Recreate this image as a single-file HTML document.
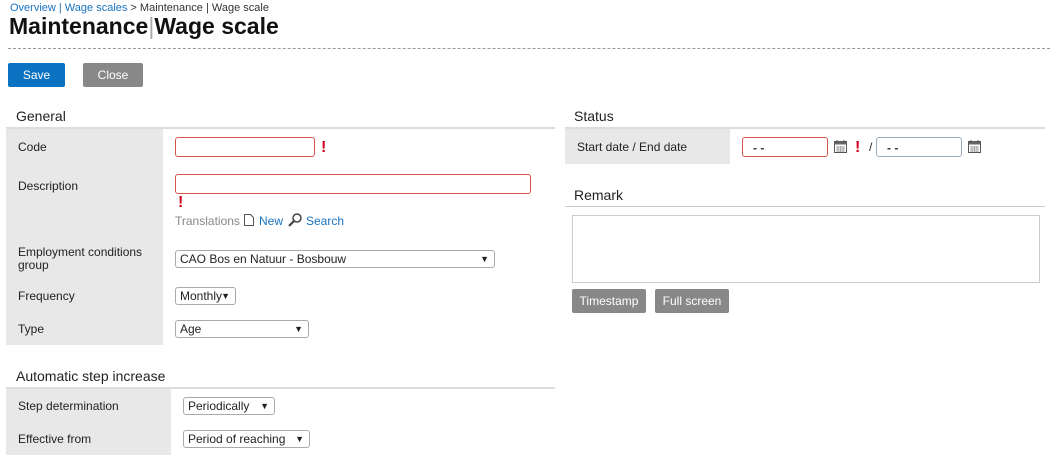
<!DOCTYPE html>
<html><head><meta charset="utf-8"><style>
*{box-sizing:border-box;margin:0;padding:0}
body{width:1058px;height:460px;background:#fff;font-family:"Liberation Sans",Arial,sans-serif;font-size:12px;color:#222;position:relative;overflow:hidden}
.a{position:absolute}
.bc{left:10px;top:2px;font-size:11px;color:#333}
.bc span{color:#1a73c0}
h1{position:absolute;left:9px;top:13px;font-size:23px;font-weight:bold;color:#111}
h1 i{font-style:normal;color:#aaa;font-weight:normal}
.dash{left:8px;top:48px;width:1042px;border-top:1px dashed #999}
.btn{position:absolute;color:#fff;font-size:12px;text-align:center;border-radius:2px}
.sec{position:absolute;font-size:14px;color:#222}
.line{position:absolute;border-top:2px solid #ddd}
.gray{position:absolute;background:#e8e8e8}
.lbl{position:absolute;font-size:12px;color:#222}
.inp{position:absolute;border:1px solid #d9534f;border-radius:3px;background:#fff}
.sel{position:absolute;border:1px solid #aaa;border-radius:3px;background:#fff;font-size:12px;padding:3px 4px;line-height:11px;height:18px}
.sel:after{content:"▼";position:absolute;right:5px;top:3px;font-size:9px}
.ex{position:absolute;color:#d0021b;font-weight:bold;font-size:16px}
.cal{position:absolute}
.dt{font-size:12px;padding:3px 10px;color:#333;font-weight:bold}
</style></head><body>
<div class="a bc"><span>Overview | Wage scales</span> &gt; Maintenance | Wage scale</div>
<h1>Maintenance<i>|</i>Wage scale</h1>
<div class="a dash"></div>
<div class="btn" style="left:8px;top:63px;width:57px;height:24px;line-height:24px;background:#0a72c0">Save</div>
<div class="btn" style="left:83px;top:63px;width:60px;height:24px;line-height:24px;background:#888">Close</div>

<div class="sec" style="left:16px;top:108px">General</div>
<div class="line" style="left:6px;top:127px;width:549px"></div>
<div class="gray" style="left:6px;top:129px;width:157px;height:216px"></div>
<div class="lbl" style="left:18px;top:140px">Code</div>
<div class="inp" style="left:175px;top:137px;width:140px;height:20px"></div>
<div class="ex" style="left:321px;top:139px">!</div>
<div class="lbl" style="left:18px;top:179px">Description</div>
<div class="inp" style="left:175px;top:174px;width:356px;height:20px"></div>
<div class="ex" style="left:178px;top:194px">!</div>
<div class="lbl" style="left:175px;top:214px;color:#888">Translations</div>
<svg class="a" style="left:243px;top:213px" width="12" height="14"><path d="M1.5 1.5h6l3 3v8h-9z" fill="none" stroke="#555"/></svg>
<div class="lbl" style="left:259px;top:214px;color:#1a73c0">New</div>
<svg class="a" style="left:287px;top:212px" width="16" height="16"><circle cx="10" cy="6" r="4" fill="none" stroke="#444" stroke-width="1.5"/><path d="M7 9l-5 5" stroke="#444" stroke-width="2.2"/></svg>
<div class="lbl" style="left:306px;top:214px;color:#1a73c0">Search</div>
<div class="lbl" style="left:18px;top:246px;line-height:13px">Employment conditions<br>group</div>
<div class="sel" style="left:175px;top:250px;width:320px">CAO Bos en Natuur - Bosbouw</div>
<div class="lbl" style="left:18px;top:289px">Frequency</div>
<div class="sel" style="left:175px;top:287px;width:61px;padding-right:16px">Monthly</div>
<div class="lbl" style="left:18px;top:322px">Type</div>
<div class="sel" style="left:175px;top:320px;width:134px">Age</div>

<div class="sec" style="left:16px;top:368px">Automatic step increase</div>
<div class="line" style="left:6px;top:387px;width:549px"></div>
<div class="gray" style="left:6px;top:389px;width:165px;height:66px"></div>
<div class="lbl" style="left:18px;top:399px">Step determination</div>
<div class="sel" style="left:183px;top:397px;width:92px">Periodically</div>
<div class="lbl" style="left:18px;top:432px">Effective from</div>
<div class="sel" style="left:183px;top:430px;width:127px">Period of reaching</div>

<div class="sec" style="left:574px;top:108px">Status</div>
<div class="line" style="left:565px;top:127px;width:480px"></div>
<div class="gray" style="left:565px;top:129px;width:165px;height:35px"></div>
<div class="lbl" style="left:577px;top:140px">Start date / End date</div>
<div class="inp dt" style="left:742px;top:137px;width:86px;height:20px">- -</div>
<svg class="cal" style="left:833px;top:139px" width="15" height="15"><rect x="1.5" y="2.5" width="12" height="11" fill="#fff" stroke="#555"/><rect x="1.5" y="2.5" width="12" height="3" fill="#666"/><path d="M4 1v3M11 1v3" stroke="#555"/><path d="M3 8h9M3 10h9M3 12h9M5 7v6M7.5 7v6M10 7v6" stroke="#999" stroke-width=".8"/></svg>
<div class="ex" style="left:855px;top:139px">!</div>
<div class="lbl" style="left:869px;top:140px">/</div>
<div class="inp dt" style="left:876px;top:137px;width:86px;height:20px;border-color:#9ab">- -</div>
<svg class="cal" style="left:967px;top:139px" width="15" height="15"><rect x="1.5" y="2.5" width="12" height="11" fill="#fff" stroke="#555"/><rect x="1.5" y="2.5" width="12" height="3" fill="#666"/><path d="M4 1v3M11 1v3" stroke="#555"/><path d="M3 8h9M3 10h9M3 12h9M5 7v6M7.5 7v6M10 7v6" stroke="#999" stroke-width=".8"/></svg>

<div class="sec" style="left:574px;top:187px">Remark</div>
<div class="line" style="left:565px;top:206px;width:480px;border-top-width:1px;border-color:#ccc"></div>
<div class="a" style="left:572px;top:215px;width:468px;height:68px;border:1px solid #ccc"></div>
<div class="btn" style="left:572px;top:289px;width:74px;height:24px;line-height:24px;background:#888">Timestamp</div>
<div class="btn" style="left:655px;top:289px;width:74px;height:24px;line-height:24px;background:#888">Full screen</div>
</body></html>
